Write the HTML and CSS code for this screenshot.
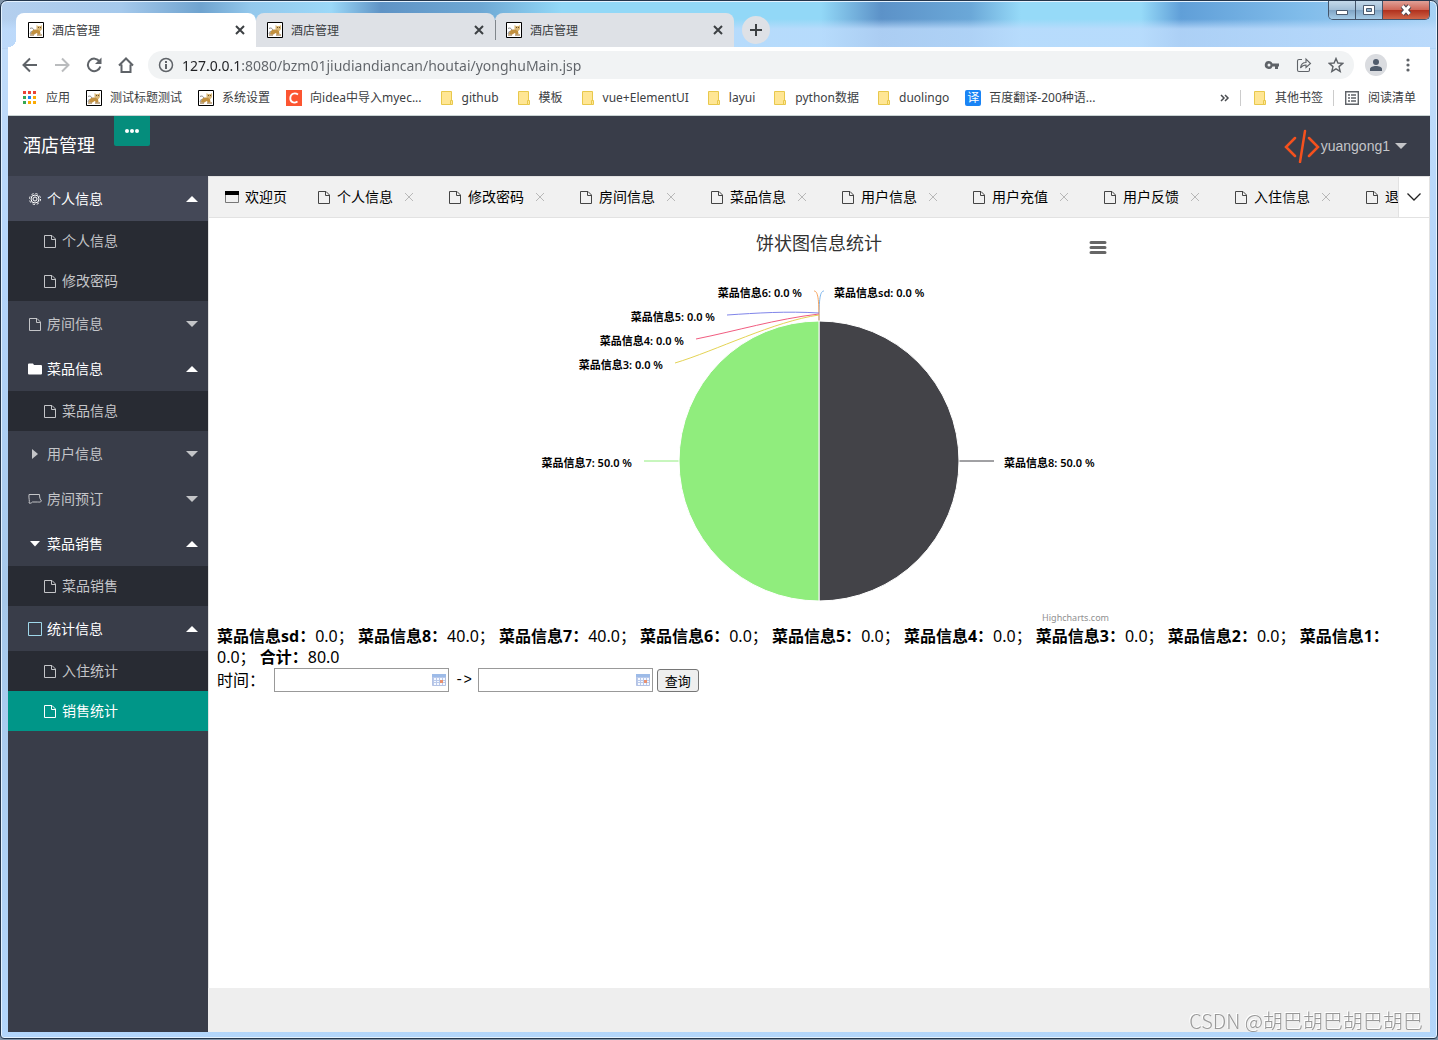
FILE: index.html
```html
<!DOCTYPE html>
<html lang="zh-CN">
<head>
  <meta charset="UTF-8" />
  <meta name="viewport" content="width=device-width, initial-scale=1.0" />
  <title>酒店管理</title>
  <link rel="stylesheet" href="styles.css">
</head>
<body>
  <!-- shared icons -->
  <svg class="sprite" aria-hidden="true">
    <symbol id="i-cat" viewBox="0 0 16 16">
      <path d="M.5.5h15v15H.5z" fill="#fff" stroke="#000" />
      <path d="M8.500 3l1.500 1h2.500L14 3v4l-1.500 2H10L8.500 7z" fill="#d9b878" />
      <path d="M3 12c0-3 2-5 6-4.500l3 1.500.5 3-2 .5-2-1.500-2 1.500z" fill="#c2903f" />
      <path d="M2 6.500c1.500-1 3-.5 4 1.500M3.500 9L2 12" stroke="#8b8b8b" fill="none" />
      <path d="M2 13h4M9 13h5" stroke="#8a5c1c" fill="none" />
      <path d="M10 5.500h1M12 5.500h1" stroke="#6a5030" fill="none" />
    </symbol>
    <symbol id="i-folder" viewBox="0 0 16 16">
      <path d="M3.500 1.500h10v13h-10z" fill="#ffe694" stroke="#e8c84c" />
      <path d="M12.500 10.500h2v4h-2z" fill="#ffe694" stroke="#e8c84c" />
    </symbol>
    <symbol id="i-x" viewBox="0 0 10 10">
      <path d="M1 1l8 8M9 1L1 9" fill="none" stroke="currentColor" />
    </symbol>
    <symbol id="i-file" viewBox="0 0 14 14">
      <path d="M1.500 1.500h7.500l3.500 3.500v8.500h-11zM8.500 1.500v4h4" fill="none" stroke="currentColor" />
    </symbol>
    <symbol id="i-calendar" viewBox="0 0 16 14">
      <path d="M1.500 1.500h13v11h-13z" fill="#b9c9ea" stroke="#b3c2e4" />
      <path d="M1 1h14v3H1z" fill="#9dbbe8" />
      <path d="M3 5h2v2H3zM6 5h2v2H6zM9 5h2v2H9zM12 5h2v2h-2zM3 8h2v1H3zM6 8h2v1H6zM12 8h2v1h-2zM3 10h2v2H3zM6 10h2v2H6zM9 10h2v2H9zM12 10h2v2h-2z" fill="#f6f9ff" />
      <path d="M9 7h3v3H9z" fill="#e8906f" />
    </symbol>
  </svg>

  <div class="window">
    <div class="titlebar">
      <div class="browser-tab active">
        <svg class="favicon"><use href="#i-cat" /></svg>
        <span>酒店管理</span>
        <button class="tab-close" aria-label="关闭"><svg><use href="#i-x" /></svg></button>
      </div>
      <div class="browser-tab">
        <svg class="favicon"><use href="#i-cat" /></svg>
        <span>酒店管理</span>
        <button class="tab-close" aria-label="关闭"><svg><use href="#i-x" /></svg></button>
      </div>
      <div class="browser-tab">
        <svg class="favicon"><use href="#i-cat" /></svg>
        <span>酒店管理</span>
        <button class="tab-close" aria-label="关闭"><svg><use href="#i-x" /></svg></button>
      </div>
      <button class="new-tab" aria-label="新标签页">
        <svg viewBox="0 0 12 12" width="12" height="12"><path d="M6 0v12M0 6h12" stroke="#3c4043" stroke-width="2" /></svg>
      </button>
      <div class="window-controls">
        <button aria-label="最小化"><svg viewBox="0 0 14 14" width="14" height="14"><path d="M1.500 7.500h11v4h-11z" fill="#fff" stroke="#4b5a6e" /></svg></button>
        <button aria-label="最大化"><svg viewBox="0 0 14 14" width="14" height="14"><path d="M1.500 2.500h11v9h-11z" fill="#fff" stroke="#4b5a6e" /><path d="M4.500 5.500h5v3h-5z" fill="#8fb3d0" stroke="#4b5a6e" /></svg></button>
        <button class="close" aria-label="关闭"><svg viewBox="0 0 14 14" width="14" height="14"><path d="M3.500 3l7 8M10.500 3l-7 8" stroke="#4b4650" stroke-width="5" /><path d="M3.500 3l7 8M10.500 3l-7 8" stroke="#fff" stroke-width="3" /></svg></button>
      </div>
    </div>

    <div class="toolbar">
      <button aria-label="后退"><svg viewBox="0 0 16 16" width="16" height="16"><path d="M15 8H2M8 1.500L1.500 8 8 14.500" fill="none" stroke="#5f6368" stroke-width="2" /></svg></button>
      <button aria-label="前进"><svg viewBox="0 0 16 16" width="16" height="16"><path d="M1 8h13M8 1.500L14.500 8 8 14.500" fill="none" stroke="#babcbe" stroke-width="2" /></svg></button>
      <button aria-label="刷新"><svg viewBox="0 0 16 16" width="16" height="16"><path d="M13.500 4.500A6.300 6.300 0 1 0 14.300 9.500" fill="none" stroke="#5f6368" stroke-width="2" /><path d="M15.500.5v6.500H9z" fill="#5f6368" /></svg></button>
      <button aria-label="主页"><svg viewBox="0 0 16 16" width="16" height="16"><path d="M1 8.500L8 1.500l7 7M3.500 7.500V15h9V7.500" fill="none" stroke="#5f6368" stroke-width="2" /></svg></button>
      <form class="address">
        <svg viewBox="0 0 16 16" width="16" height="16"><circle cx="8" cy="8" r="6.500" fill="none" stroke="#5f6368" stroke-width="1.500" /><path d="M8 7v5M8 4v2" stroke="#5f6368" stroke-width="2" /></svg>
        <input type="text" aria-label="地址" value="127.0.0.1:8080/bzm01jiudiandiancan/houtai/yonghuMain.jsp" />
        <button type="button" aria-label="密码"><svg viewBox="0 0 16 16" width="16" height="16"><path d="M5 4a4 4 0 1 0 3.500 5.500H11V12h3V9.500h1V6.500H8.500A4 4 0 0 0 5 4zm0 2.500a1.500 1.500 0 1 1 0 3 1.500 1.500 0 0 1 0-3z" fill="#5f6368" /></svg></button>
        <button type="button" aria-label="分享"><svg viewBox="0 0 16 16" width="16" height="16"><path d="M6 2.500H3A1.500 1.500 0 0 0 1.500 4v9A1.500 1.500 0 0 0 3 14.500h9a1.500 1.500 0 0 0 1.500-1.500v-2M4.500 11c.5-4 2-5.500 5.500-5.500V2l4.500 4.500L10 10.500V8C7.500 8 6 8.800 4.500 11z" fill="none" stroke="#5f6368" stroke-width="1.100" /></svg></button>
        <button type="button" aria-label="收藏"><svg viewBox="0 0 16 16" width="16" height="16"><path d="M8 1.500l1.900 4.500 4.800.4-3.700 3.200 1.200 4.800L8 11.800l-4.200 2.600L5 9.600 1.300 6.400 6.100 6z" fill="none" stroke="#5f6368" stroke-width="1.400" /></svg></button>
      </form>
      <button aria-label="用户"><svg viewBox="0 0 22 22" width="22" height="22"><circle cx="11" cy="11" r="11" fill="#dadce0" /><circle cx="11" cy="8" r="3" fill="#4f5b6b" /><path d="M5 17v-2c0-2 3-3 6-3s6 1 6 3v2z" fill="#4f5b6b" /></svg></button>
      <button aria-label="菜单"><svg viewBox="0 0 16 16" width="16" height="16"><circle cx="8" cy="3" r="1.600" fill="#5f6368" /><circle cx="8" cy="8" r="1.600" fill="#5f6368" /><circle cx="8" cy="13" r="1.600" fill="#5f6368" /></svg></button>
    </div>

    <nav class="bookmarks">
      <a href="#"><svg viewBox="0 0 16 16"><path d="M1 1h3v3H1zM6 1h3v3H6zM11 1h3v3h-3z" fill="#ea4335" /><path d="M1 6h3v3H1zM1 11h3v3H1z" fill="#34a853" /><path d="M6 6h3v3H6z" fill="#1a84f0" /><path d="M11 6h3v3h-3zM6 11h3v3H6zM11 11h3v3h-3z" fill="#fbab04" /></svg>应用</a>
      <a href="#"><svg><use href="#i-cat" /></svg>测试标题测试</a>
      <a href="#"><svg><use href="#i-cat" /></svg>系统设置</a>
      <a href="#"><svg viewBox="0 0 16 16"><path d="M0 0h16v16H0z" fill="#fc5531" /><path d="M12 4.500C8.500 2 4.500 3.800 4.300 8s3.500 5.800 7.200 3.500" fill="none" stroke="#fff" stroke-width="1.800" /></svg>向idea中导入myec...</a>
      <a href="#"><svg><use href="#i-folder" /></svg>github</a>
      <a href="#"><svg><use href="#i-folder" /></svg>模板</a>
      <a href="#"><svg><use href="#i-folder" /></svg>vue+ElementUI</a>
      <a href="#"><svg><use href="#i-folder" /></svg>layui</a>
      <a href="#"><svg><use href="#i-folder" /></svg>python数据</a>
      <a href="#"><svg><use href="#i-folder" /></svg>duolingo</a>
      <a href="#"><span class="badge">译</span>百度翻译-200种语...</a>
      <div class="bookmarks-end">
        <button aria-label="更多书签"><svg viewBox="0 0 10 8" width="10" height="8"><path d="M1 1l3 3-3 3M5 1l3 3-3 3" fill="none" stroke="#4a4d51" stroke-width="1.500" /></svg></button>
        <a href="#" class="divided"><svg><use href="#i-folder" /></svg>其他书签</a>
        <a href="#" class="divided"><svg viewBox="0 0 16 16"><path d="M1.700 1.700h12.600v12.600H1.700z" fill="none" stroke="#5f6368" stroke-width="1.400" /><path d="M4 5h2M7 5h5M4 8h2M7 8h5M4 11h2M7 11h5" stroke="#5f6368" stroke-width="1.500" /></svg>阅读清单</a>
      </div>
    </nav>

    <div class="app">
      <header class="app-header">
        <div class="logo">酒店管理</div>
        <button class="toggle" aria-label="收起菜单"><svg viewBox="0 0 14 4" width="14" height="4"><circle cx="2" cy="2" r="2" fill="#fff" /><circle cx="7" cy="2" r="2" fill="#fff" /><circle cx="12" cy="2" r="2" fill="#fff" /></svg></button>
        <a href="#" class="user">
          <svg viewBox="0 0 36 34" width="36" height="34"><path d="M11 9L2 18l9 9M25 9l9 9-9 9M21 2l-5 31" fill="none" stroke="#f4511e" stroke-width="2.500" stroke-linecap="round" /></svg>
          yuangong1<span class="caret"></span>
        </a>
      </header>

      <nav class="sidebar">
        <a href="#" class="item open hover"><svg viewBox="0 0 14 14"><circle cx="7" cy="7" r="2" fill="none" stroke="currentColor" /><circle cx="7" cy="7" r="4" fill="none" stroke="currentColor" /><circle cx="7" cy="7" r="5.500" fill="none" stroke="currentColor" stroke-dasharray="2.300 2" /></svg><span>个人信息</span><span class="caret"></span></a>
        <div class="children">
          <a href="#"><svg><use href="#i-file" /></svg><span>个人信息</span></a>
          <a href="#"><svg><use href="#i-file" /></svg><span>修改密码</span></a>
        </div>
        <a href="#" class="item"><svg><use href="#i-file" /></svg><span>房间信息</span><span class="caret"></span></a>
        <a href="#" class="item open"><svg viewBox="0 0 14 14"><path d="M0 2.500Q0 1.500 1 1.500h4l1 1.500h7q1 0 1 1v7.500q0 1-1 1H1q-1 0-1-1z" fill="currentColor" /></svg><span>菜品信息</span><span class="caret"></span></a>
        <div class="children">
          <a href="#"><svg><use href="#i-file" /></svg><span>菜品信息</span></a>
        </div>
        <a href="#" class="item"><svg viewBox="0 0 14 14"><path d="M4 2l6 5-6 5z" fill="currentColor" /></svg><span>用户信息</span><span class="caret"></span></a>
        <a href="#" class="item"><svg viewBox="0 0 14 14"><path d="M3 2.500h8.500c0 4 1 5 2 6.500-1 1.500-2 1-4 1H4.500C3.500 11 2.500 11.500 1 11c1-1.500-.5-5 0-8.500z" fill="none" stroke="currentColor" /></svg><span>房间预订</span><span class="caret"></span></a>
        <a href="#" class="item open"><svg viewBox="0 0 14 14"><path d="M2 4h10L7 9.500z" fill="currentColor" /></svg><span>菜品销售</span><span class="caret"></span></a>
        <div class="children">
          <a href="#"><svg><use href="#i-file" /></svg><span>菜品销售</span></a>
        </div>
        <a href="#" class="item open"><svg viewBox="0 0 14 14"><path d="M.5.5h13v13H.5z" fill="none" stroke="#9fd8ea" /></svg><span>统计信息</span><span class="caret"></span></a>
        <div class="children">
          <a href="#"><svg><use href="#i-file" /></svg><span>入住统计</span></a>
          <a href="#" class="current"><svg><use href="#i-file" /></svg><span>销售统计</span></a>
        </div>
      </nav>

      <div class="page-tabs">
        <ul>
          <li><svg class="icon" viewBox="0 0 14 14"><path d="M.5 1.500h13v11H.5z" fill="none" stroke="#777" /><path d="M0 1h14v4H0z" fill="#000" /></svg><a href="#">欢迎页</a></li>
          <li><svg class="icon"><use href="#i-file" /></svg><a href="#">个人信息</a><button aria-label="关闭"><svg><use href="#i-x" /></svg></button></li>
          <li><svg class="icon"><use href="#i-file" /></svg><a href="#">修改密码</a><button aria-label="关闭"><svg><use href="#i-x" /></svg></button></li>
          <li><svg class="icon"><use href="#i-file" /></svg><a href="#">房间信息</a><button aria-label="关闭"><svg><use href="#i-x" /></svg></button></li>
          <li><svg class="icon"><use href="#i-file" /></svg><a href="#">菜品信息</a><button aria-label="关闭"><svg><use href="#i-x" /></svg></button></li>
          <li><svg class="icon"><use href="#i-file" /></svg><a href="#">用户信息</a><button aria-label="关闭"><svg><use href="#i-x" /></svg></button></li>
          <li><svg class="icon"><use href="#i-file" /></svg><a href="#">用户充值</a><button aria-label="关闭"><svg><use href="#i-x" /></svg></button></li>
          <li><svg class="icon"><use href="#i-file" /></svg><a href="#">用户反馈</a><button aria-label="关闭"><svg><use href="#i-x" /></svg></button></li>
          <li><svg class="icon"><use href="#i-file" /></svg><a href="#">入住信息</a><button aria-label="关闭"><svg><use href="#i-x" /></svg></button></li>
          <li><svg class="icon"><use href="#i-file" /></svg><a href="#">退</a></li>
        </ul>
        <button class="more" aria-label="更多标签"><svg viewBox="0 0 14 8" width="14" height="8"><path d="M.5.5L7 7 13.500.5" fill="none" stroke="#222" stroke-width="1.300" /></svg></button>
      </div>

      <main class="content">
        <svg class="chart" viewBox="0 0 600 400" role="img" aria-label="饼状图信息统计">
          <text class="chart-title" x="300" y="24">饼状图信息统计</text>
          <path d="M572 16.500h14M572 21.500h14M572 26.500h14" stroke="#666" stroke-width="3" stroke-linecap="round" />
          <g fill="none">
            <path d="M305 65c-4 0-5 8-5 30" stroke="#7cb5ec" />
            <path d="M295 65c4 0 5 8 5 30" stroke="#f7a35c" />
            <path d="M208 89c30-2 60-4 92-2" stroke="#8085e9" />
            <path d="M177 113c40-8 80-20 123-25" stroke="#f15c80" />
            <path d="M156 137c40-12 100-42 144-48" stroke="#e4d354" />
            <path d="M125 235h35" stroke="#90ed7d" />
            <path d="M440 235h35" stroke="#434348" />
          </g>
          <path d="M300 95a140 140 0 0 1 0 280z" fill="#434348" stroke="#fff" />
          <path d="M300 375a140 140 0 0 1 0-280z" fill="#90ed7d" stroke="#fff" />
          <g class="chart-labels">
            <text x="315" y="71">菜品信息sd: 0.0 %</text>
            <text x="485" y="241">菜品信息8: 50.0 %</text>
            <text class="end" x="113" y="241">菜品信息7: 50.0 %</text>
            <text class="end" x="283" y="71">菜品信息6: 0.0 %</text>
            <text class="end" x="196" y="95">菜品信息5: 0.0 %</text>
            <text class="end" x="165" y="119">菜品信息4: 0.0 %</text>
            <text class="end" x="144" y="143">菜品信息3: 0.0 %</text>
          </g>
          <text class="chart-credits" x="590" y="395">Highcharts.com</text>
        </svg>

        <div class="summary">
          <b>菜品信息sd：</b>0.0；
          <b>菜品信息8：</b>40.0；
          <b>菜品信息7：</b>40.0；
          <b>菜品信息6：</b>0.0；
          <b>菜品信息5：</b>0.0；
          <b>菜品信息4：</b>0.0；
          <b>菜品信息3：</b>0.0；
          <b>菜品信息2：</b>0.0；
          <b>菜品信息1：</b>0.0；
          <b>合计：</b>80.0
        </div>

        <form class="filter">
          <label for="start-date">时间：</label>
          <div class="date"><input type="text" id="start-date" /><svg><use href="#i-calendar" /></svg></div>
          <span class="arrow">-&gt;</span>
          <div class="date"><input type="text" id="end-date" aria-label="结束时间" /><svg><use href="#i-calendar" /></svg></div>
          <button type="button">查询</button>
        </form>
      </main>

      <footer class="app-footer"></footer>
    </div>
  </div>
  <div class="watermark">CSDN @胡巴胡巴胡巴胡巴</div>
</body>
</html>
```

FILE: styles.css
```css
* {
  box-sizing: border-box;
}
body {
  margin: 0;
  height: 100vh;
  padding-bottom: 1px;
  background: #7f93a8;
  font-family: "Noto Sans", "Noto Sans CJK SC", sans-serif;
  font-size: 14px;
  color: #000;
}
a {
  color: inherit;
  text-decoration: none;
}
button {
  display: flex;
  align-items: center;
  justify-content: center;
  padding: 0;
  border: none;
  background: none;
  font-family: inherit;
  cursor: pointer;
}
svg {
  flex: none;
}
.sprite {
  position: absolute;
  width: 0;
  height: 0;
}

/* window frame */
.window {
  height: 100%;
  display: flex;
  flex-direction: column;
  padding: 0 7px 6px;
  border: 1px solid #24364c;
  border-radius: 7px 7px 4px 4px;
  box-shadow: inset 0 0 0 1px #e4f2ff;
  background:
    linear-gradient(#fff0 18px, #bfdcfdcc 28px, #bfdcfdcc 47px, #fff0 48px),
    linear-gradient(90deg, #b4cfee 0, #a5c9ec 120px, #6fa3cf 200px, #93c8ec 250px, #9bd8f8 330px, #5f93c5 380px, #6ea8d4 480px, #92d8f7 560px, #92d8f7 820px, #5c92c8 880px, #6ba8d8 970px, #96daf8 1020px, #96daf8 1140px, #609fd8 1180px, #80bcea 1300px, #a8d2f5 1438px) 0 0 / 100% 48px no-repeat,
    linear-gradient(#c4defa, #b3d4fa 290px, #a6c8ea 600px, #b3d6fb);
}
.titlebar {
  display: flex;
  align-items: flex-end;
  height: 46px;
  padding-left: 8px;
}
.browser-tab {
  position: relative;
  display: flex;
  align-items: center;
  gap: 8px;
  width: 239px;
  height: 34px;
  padding: 0 11px;
  border-radius: 8px 8px 0 0;
  background: #dee1e6;
  font-size: 12px;
  color: #3c4043;
}
.browser-tab.active {
  background: #fff;
  width: 240px;
  padding-left: 12px;
}
.browser-tab.active::before {
  content: "";
  position: absolute;
  left: -8px;
  bottom: 0;
  width: 8px;
  height: 8px;
  background: radial-gradient(circle at 0 0, #fff0 8px, #fff 8px);
}
.browser-tab:nth-child(3)::before {
  content: "";
  position: absolute;
  left: 0;
  top: 7px;
  width: 1px;
  height: 20px;
  background: #80868b;
}
.favicon {
  width: 16px;
  height: 16px;
}
.tab-close {
  margin-left: auto;
  color: #3c4043;
}
.tab-close svg {
  width: 10px;
  height: 10px;
  stroke-width: 2px;
}
.new-tab {
  width: 28px;
  height: 28px;
  margin: 0 0 3px 8px;
  border-radius: 50%;
  background: #dee1e6;
}
.window-controls {
  display: flex;
  align-self: flex-start;
  margin-left: auto;
  border: 1px solid #44546a;
  border-top: none;
  border-radius: 0 0 5px 5px;
  overflow: hidden;
}
.window-controls button {
  width: 27px;
  height: 18px;
  border-right: 1px solid #44546a;
  background: linear-gradient(#c4d9ea, #a0bdd6 50%, #7fa3c4 50%, #a4cae6);
}
.window-controls .close {
  width: 46px;
  border-right: none;
  background: linear-gradient(#e0a097, #cf6656 50%, #b02f1c 50%, #cf6548);
}

/* address bar */
.toolbar {
  display: flex;
  align-items: center;
  padding: 4px 6px;
  background: #fff;
}
.toolbar button {
  width: 32px;
  height: 28px;
}
.address {
  flex: 1;
  display: flex;
  align-items: center;
  gap: 8px;
  height: 28px;
  margin: 0 6px;
  padding: 0 2px 0 10px;
  border-radius: 14px;
  background: #f1f3f4;
}
.address button {
  margin-left: -8px;
}
.address input {
  flex: 1;
  min-width: 0;
  padding: 0;
  border: none;
  outline: none;
  background: linear-gradient(90deg, #202124 59px, #5f6368 59px);
  -webkit-background-clip: text;
  background-clip: text;
  color: transparent;
  font-family: inherit;
  font-size: 14px;
}

/* bookmarks */
.bookmarks {
  display: flex;
  align-items: center;
  gap: 16px;
  padding: 5px 14px 7px;
  border-bottom: 1px solid #c9d3d3;
  background: #fff;
  font-size: 12px;
  line-height: 20px;
  color: #3c4043;
  white-space: nowrap;
}
.bookmarks a {
  display: flex;
  align-items: center;
  gap: 8px;
}
.bookmarks a svg {
  width: 16px;
  height: 16px;
}
.badge {
  width: 16px;
  height: 16px;
  border-radius: 2px;
  background: #1a84f5;
  color: #fff;
  line-height: 16px;
  text-align: center;
}
.bookmarks-end {
  display: flex;
  align-items: center;
  gap: 10px;
  margin-left: auto;
}
.bookmarks-end .divided {
  padding-left: 10px;
  border-left: 1px solid #ccc;
  line-height: 16px;
}

/* admin layout */
.app {
  flex: 1;
  min-height: 0;
  display: grid;
  grid-template-columns: 200px minmax(0, 1fr);
  grid-template-rows: 60px 42px minmax(0, 1fr) 44px;
  background: #fff;
}
.app-header {
  grid-column: 1 / 3;
  display: flex;
  align-items: flex-start;
  padding: 0 23px 0 15px;
  background: #393d49;
  color: #fff;
}
.logo {
  font-size: 18px;
  line-height: 58px;
}
.toggle {
  width: 36px;
  height: 30px;
  margin-left: 19px;
  border-radius: 0 0 2px 2px;
  background: #058d7c;
}
.user {
  display: flex;
  align-items: center;
  gap: 1px;
  height: 60px;
  margin-left: auto;
  font-family: "Liberation Sans", Arial, sans-serif;
  color: #c4c5c8;
}
.caret {
  border: 6px solid transparent;
  border-top-color: currentColor;
  border-bottom-width: 0;
}
.user .caret {
  margin-left: 4px;
}
.sidebar {
  grid-row: 2 / 5;
  background: #393d49;
  color: #c4c5c8;
}
.sidebar a {
  display: flex;
  align-items: center;
  gap: 5px;
}
.sidebar a span:first-of-type {
  padding-bottom: 2px;
}
.sidebar svg {
  width: 14px;
  height: 14px;
}
.item {
  height: 45px;
  padding: 0 10px 0 20px;
}
.item .caret {
  margin-left: auto;
}
.item.open {
  color: #fff;
}
.item.open .caret {
  border-width: 0 6px 6px;
  border-bottom-color: currentColor;
}
.item.hover {
  background: #444857;
}
.children {
  background: #282b33;
}
.children a {
  height: 40px;
  padding-left: 35px;
}
.children .current {
  background: #009688;
  color: #fff;
}

.page-tabs {
  display: flex;
  border: 1px solid #e2e2e2;
  background: #f1f1f1;
}
.page-tabs ul {
  flex: 1;
  display: flex;
  margin: 0;
  padding: 0 0 0 1px;
  overflow: hidden;
  list-style: none;
}
.page-tabs li {
  flex: none;
  display: flex;
  align-items: center;
  gap: 6px;
  padding: 0 15px;
}
.page-tabs li a {
  padding-bottom: 2px;
}
.page-tabs li:last-child {
  padding-right: 0;
}
.page-tabs .icon {
  width: 14px;
  height: 14px;
  color: #444;
}
.page-tabs li button {
  width: 18px;
  height: 18px;
  margin-left: 1px;
  color: #b8b8b8;
}
.page-tabs li button svg {
  width: 10px;
  height: 10px;
}
.page-tabs .more {
  width: 31px;
  border-left: 1px solid #e2e2e2;
  background: #fff;
}

.content {
  padding: 8px;
  border: 1px solid #e2e2e2;
  border-width: 0 1px;
  font-size: 16px;
}
.chart {
  display: block;
  width: 600px;
  max-width: 100%;
  margin: 0 auto;
}
.chart-title {
  font-size: 18px;
  fill: #333;
  text-anchor: middle;
}
.chart-labels {
  font-size: 11px;
  font-weight: 600;
}
.chart-labels .end {
  text-anchor: end;
}
.chart-credits {
  font-size: 9px;
  fill: #909090;
  text-anchor: end;
}
.summary {
  line-height: 21px;
}
.filter {
  display: flex;
  align-items: center;
  line-height: 24px;
}
.date {
  display: flex;
  align-items: center;
  width: 175px;
  height: 24px;
  padding-right: 1px;
  border: 1px solid #999;
}
.filter label {
  margin-right: 9px;
}
.date input {
  flex: 1;
  min-width: 0;
  border: none;
  outline: none;
  background: none;
}
.date svg {
  width: 16px;
  height: 14px;
}
.arrow {
  margin: 0 6px;
  font-family: "Liberation Mono", monospace;
  font-size: 14px;
}
.filter button {
  height: 23px;
  margin-left: 4px;
  padding: 0 7px;
  border: 1px solid #767676;
  border-radius: 3px;
  background: #efefef;
  font-size: 13px;
}
.app-footer {
  background: #eee;
}

.watermark {
  position: fixed;
  right: 15px;
  bottom: 5px;
  font-family: "Noto Sans CJK SC", sans-serif;
  font-size: 20px;
  font-weight: 300;
  line-height: 28px;
  color: #999;
  text-shadow: -1px -1px 0 #fff;
}
```
